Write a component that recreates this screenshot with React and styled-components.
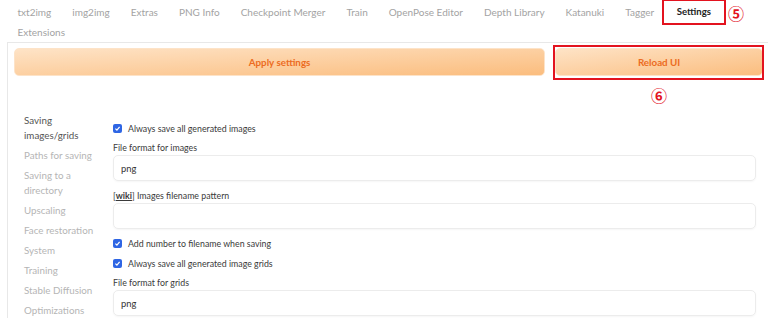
import React from "react";
import styled, { createGlobalStyle } from "styled-components";

const GlobalStyle = createGlobalStyle`
  body {
    margin: 0;
    background: #ffffff;
    font-family: Lato, "Open Sans", sans-serif;
  }
`;

const tabs = [
  "txt2img",
  "img2img",
  "Extras",
  "PNG Info",
  "Checkpoint Merger",
  "Train",
  "OpenPose Editor",
  "Depth Library",
  "Katanuki",
  "Tagger",
  "Settings",
  "Extensions",
];

const sections = [
  "Saving images/grids",
  "Paths for saving",
  "Saving to a directory",
  "Upscaling",
  "Face restoration",
  "System",
  "Training",
  "Stable Diffusion",
  "Optimizations",
];

const Page = styled.div`
  width: 768px;
  height: 318px;
  overflow: hidden;
  padding-left: 7px;
  box-sizing: border-box;
`;

const TabBar = styled.div`
  display: flex;
  flex-wrap: wrap;
  padding-top: 2px;
`;

const Tab = styled.div`
  position: relative;
  height: 20px;
  line-height: 20px;
  padding: 0 ${(p) => (p.$active ? "12px" : "10.5px")};
  font-size: ${(p) => (p.$active ? "9.6px" : "10px")};
  color: ${(p) => (p.$active ? "#222" : "#a3a3a3")};
  font-weight: ${(p) => (p.$active ? 700 : 400)};
  outline: ${(p) => (p.$active ? "2px solid #e3131f" : "none")};
  outline-offset: 1px;
`;

const Marker = styled.span`
  position: absolute;
  color: #e3131f;
  font-size: 16px;
  font-family: "Noto Sans CJK JP", "DejaVu Sans", sans-serif;
  line-height: 1;
  left: ${(p) => p.$left};
  top: ${(p) => p.$top};
`;

const Panel = styled.div`
  border-top: 1px solid #e8e8e8;
  border-left: 1px solid #e8e8e8;
  padding: 5px 5px 0 6px;
`;

const ButtonRow = styled.div`
  display: flex;
  gap: 10px;
`;

const ActionButton = styled.div`
  position: relative;
  flex: ${(p) => p.$grow};
  height: 28px;
  display: flex;
  align-items: center;
  justify-content: center;
  border-radius: 5px;
  border: 1px solid #fde3c8;
  box-sizing: border-box;
  background: linear-gradient(to bottom right, #fee3c6, #fbbd7e);
  color: #ec6c22;
  font-size: 9.8px;
  font-weight: 700;

  &::after {
    content: "";
    display: ${(p) => (p.$marked ? "block" : "none")};
    position: absolute;
    inset: -4px -2px -5px -3px;
    border: 2px solid #e3131f;
  }
`;

const Body = styled.div`
  display: flex;
  margin-top: 37px;
`;

const Sidebar = styled.div`
  width: 74px;
  margin-left: 10px;
  flex-shrink: 0;
`;

const SideItem = styled.div`
  font-size: 9.8px;
  line-height: 15px;
  margin-bottom: 5px;
  color: ${(p) => (p.$active ? "#555" : "#b5b5b5")};
`;

const Content = styled.div`
  flex: 1;
  margin-left: 15px;
  margin-right: 7px;
  padding-top: 5px;
  display: flex;
  flex-direction: column;
`;

const CheckRow = styled.label`
  display: flex;
  align-items: center;
  height: 20px;
  font-size: 8.8px;
  color: #3a3a3a;
  margin-top: ${(p) => p.$gap || 0}px;
`;

const Box = styled.span`
  width: 9px;
  height: 9px;
  border-radius: 2px;
  background: #2f66e4;
  margin-right: 6px;
  display: flex;
  align-items: center;
  justify-content: center;
`;

const Field = styled.div`
  margin-top: ${(p) => p.$gap}px;
`;

const Label = styled.div`
  font-size: 8.8px;
  line-height: 14px;
  color: #3a3a3a;

  b {
    text-decoration: underline;
    font-weight: 700;
  }
`;

const Input = styled.div`
  height: 26px;
  box-sizing: border-box;
  border: 1px solid #ececec;
  border-radius: 5px;
  box-shadow: 0 1px 2px rgba(0, 0, 0, 0.04);
  padding-left: 7px;
  display: flex;
  align-items: center;
  font-size: 9.4px;
  color: #333;
`;

const Check = () => (
  <Box>
    <svg width="7" height="7" viewBox="0 0 10 10">
      <path d="M2 5.2 L4.2 7.3 L8 2.8" fill="none" stroke="#fff" strokeWidth="1.8" />
    </svg>
  </Box>
);

const App = () => {
  return (
    <>
      <GlobalStyle />
      <Page>
        <TabBar>
          {tabs.map((t) => (
            <Tab key={t} $active={t === "Settings"}>
              {t}
              {t === "Settings" && (
                <Marker $left="calc(100% + 5px)" $top="3px">
                  ⑤
                </Marker>
              )}
            </Tab>
          ))}
        </TabBar>
        <Panel>
          <ButtonRow>
            <ActionButton $grow={532}>Apply settings</ActionButton>
            <ActionButton $grow={207} $marked>
              Reload UI
              <Marker $left="calc(50% - 8px)" $top="38px">
                ⑥
              </Marker>
            </ActionButton>
          </ButtonRow>
          <Body>
            <Sidebar>
              {sections.map((s, i) => (
                <SideItem key={s} $active={i === 0}>
                  {s}
                </SideItem>
              ))}
            </Sidebar>
            <Content>
              <CheckRow>
                <Check />
                Always save all generated images
              </CheckRow>
              <Field $gap={3}>
                <Label>File format for images</Label>
                <Input>png</Input>
              </Field>
              <Field $gap={8}>
                <Label>
                  [<b>wiki</b>] Images filename pattern
                </Label>
                <Input />
              </Field>
              <CheckRow $gap={4}>
                <Check />
                Add number to filename when saving
              </CheckRow>
              <CheckRow>
                <Check />
                Always save all generated image grids
              </CheckRow>
              <Field $gap={3}>
                <Label>File format for grids</Label>
                <Input>png</Input>
              </Field>
            </Content>
          </Body>
        </Panel>
      </Page>
    </>
  );
};

export default App;
